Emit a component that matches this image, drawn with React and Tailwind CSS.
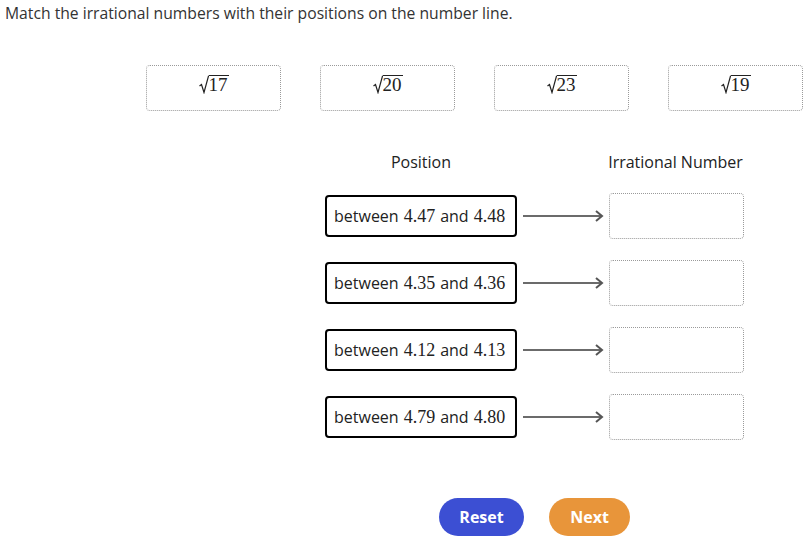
import React from 'react';

const sans = { fontFamily: '"Open Sans", "Liberation Sans", sans-serif' };
const serif = { fontFamily: '"Liberation Serif", "DejaVu Serif", serif' };

const choices = ['17', '20', '23', '19'];

const rows = [
  ['4.47', '4.48'],
  ['4.35', '4.36'],
  ['4.12', '4.13'],
  ['4.79', '4.80'],
];

// radical sign drawn as svg, the bar over the digits is a top border
const Sqrt = ({ n }) => (
  <span className="inline-flex items-start text-[#222]">
    <svg width="10" height="19" viewBox="0 0 10 19">
      <polyline points="0.5,11 2.5,9.5 5,17.5 9.6,0.6" fill="none" stroke="#222" strokeWidth="1.2" />
    </svg>
    <span className="border-t border-[#222] text-[19px] leading-[18px] pr-[1px]" style={serif}>{n}</span>
  </span>
);

const Arrow = () => (
  <svg width="82" height="14" viewBox="0 0 82 14" className="ml-[6px] mr-[4px]">
    <line x1="0" y1="7" x2="79" y2="7" stroke="#6b6b6b" strokeWidth="2" />
    <polyline points="73,2 79,7 73,12" fill="none" stroke="#555" strokeWidth="2" />
  </svg>
);

export default function App() {
  return (
    <div className="w-[809px] h-[540px] bg-white text-[#333] overflow-hidden" style={sans}>
      <p className="pl-[5px] pt-[3px] text-[15.7px] leading-[20px]">
        Match the irrational numbers with their positions on the number line.
      </p>

      <div className="flex gap-[39px] pl-[146px] mt-[42px]">
        {choices.map((c) => (
          <div
            key={c}
            className="w-[135px] h-[46px] border border-dotted border-[#9a9a9a] rounded-[4px] flex justify-center pt-[9px]"
          >
            <Sqrt n={c} />
          </div>
        ))}
      </div>

      <div className="flex mt-[41px] text-[16px] leading-[20px] text-[#222]">
        <div className="ml-[325px] w-[192px] text-center">Position</div>
        <div className="ml-[91px] w-[135px] text-center whitespace-nowrap">Irrational Number</div>
      </div>

      <div className="flex flex-col gap-[21px] mt-[21px] ml-[325px]">
        {rows.map(([a, b]) => (
          <div key={a} className="flex items-center h-[46px]">
            <div className="w-[192px] h-[42px] border-2 border-black rounded-[4px] flex items-center pl-[7px] text-[16px] text-[#222] whitespace-nowrap">
              between <span className="text-[18px] mx-[5px]" style={serif}>{a}</span> and <span className="text-[18px] ml-[5px]" style={serif}>{b}</span>
            </div>
            <Arrow />
            <div className="w-[135px] h-[46px] border border-dotted border-[#9a9a9a] rounded-[4px]" />
          </div>
        ))}
      </div>

      <div className="flex gap-[25px] ml-[439px] mt-[58px]">
        <button className="w-[85px] h-[38px] rounded-full bg-[#3c4fd3] text-white font-bold text-[16px]" style={sans}>
          Reset
        </button>
        <button className="w-[81px] h-[38px] rounded-full bg-[#e8953a] text-white font-bold text-[16px]" style={sans}>
          Next
        </button>
      </div>
    </div>
  );
}
